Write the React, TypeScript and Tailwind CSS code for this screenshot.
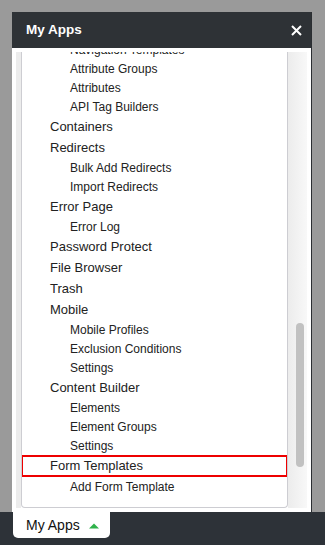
import React from "react";

type Item = { label: string; sub?: boolean; active?: boolean };

const items: Item[] = [
  { label: "Navigation Templates", sub: true },
  { label: "Attribute Groups", sub: true },
  { label: "Attributes", sub: true },
  { label: "API Tag Builders", sub: true },
  { label: "Containers" },
  { label: "Redirects" },
  { label: "Bulk Add Redirects", sub: true },
  { label: "Import Redirects", sub: true },
  { label: "Error Page" },
  { label: "Error Log", sub: true },
  { label: "Password Protect" },
  { label: "File Browser" },
  { label: "Trash" },
  { label: "Mobile" },
  { label: "Mobile Profiles", sub: true },
  { label: "Exclusion Conditions", sub: true },
  { label: "Settings", sub: true },
  { label: "Content Builder" },
  { label: "Elements", sub: true },
  { label: "Element Groups", sub: true },
  { label: "Settings", sub: true },
  { label: "Form Templates", active: true },
  { label: "Add Form Template", sub: true },
];

export default function App(): React.JSX.Element {
  return (
    <div
      className="relative flex h-[545px] w-[325px] flex-col overflow-hidden bg-[#9a9a9a] text-[#222]"
      style={{ fontFamily: '"Liberation Sans", Arial, sans-serif' }}
    >
      {/* panel */}
      <div className="ml-[12px] mt-[12px] flex w-[300px] flex-1 flex-col border-r border-[#2b2e32]">
        <div className="flex h-[36px] items-center justify-between bg-[#2e3236] pl-[14px] pr-[10px]">
          <span className="text-[13.5px] font-bold text-white">My Apps</span>
          <svg width="11" height="11" viewBox="0 0 11 11" className="mr-[-1px]">
            <path d="M1 1L10 10M10 1L1 10" stroke="#fff" strokeWidth="2" />
          </svg>
        </div>

        <div className="flex-1 bg-white px-[4px] pb-[4px] pt-[4px]">
          <div className="flex h-full">
            <div className="w-[5px] bg-[#ececec]" />
            <div className="relative flex-1 overflow-hidden rounded-b-[4px] border-x border-b border-[#cdcdd2] bg-white">
              <ul className="mt-[-12px]">
                {items.map((it, i) =>
                  it.active ? (
                    <li
                      key={i}
                      className="-mx-[1px] flex h-[22px] items-center border-2 border-[#ee0000] pl-[27px] text-[13px]"
                    >
                      {it.label}
                    </li>
                  ) : (
                    <li
                      key={i}
                      className={
                        it.sub
                          ? "flex h-[19px] items-center pl-[48px] text-[12px]"
                          : "flex h-[21px] items-center pl-[28px] text-[13px]"
                      }
                    >
                      {it.label}
                    </li>
                  ),
                )}
              </ul>
            </div>
            {/* scrollbar track */}
            <div className="relative w-[19px] bg-gradient-to-r from-[#ececec] to-[#f8f8f8]">
              <div className="absolute left-[8px] top-[271px] h-[144px] w-[8px] rounded-full bg-[#c1c1c1]" />
            </div>
          </div>
        </div>
      </div>

      {/* bottom bar */}
      <div className="flex h-[33px] bg-[#2d3238]">
        <div className="ml-[13px] flex h-[26px] w-[97px] items-center rounded-b-[5px] bg-white pl-[13px]">
          <span className="text-[14px] text-[#111]">My Apps</span>
          <svg width="10" height="6" viewBox="0 0 10 6" className="ml-[9px] mt-[2px]">
            <path d="M0 5.5L5 0.5L10 5.5Z" fill="#2fb24a" />
          </svg>
        </div>
      </div>
    </div>
  );
}
